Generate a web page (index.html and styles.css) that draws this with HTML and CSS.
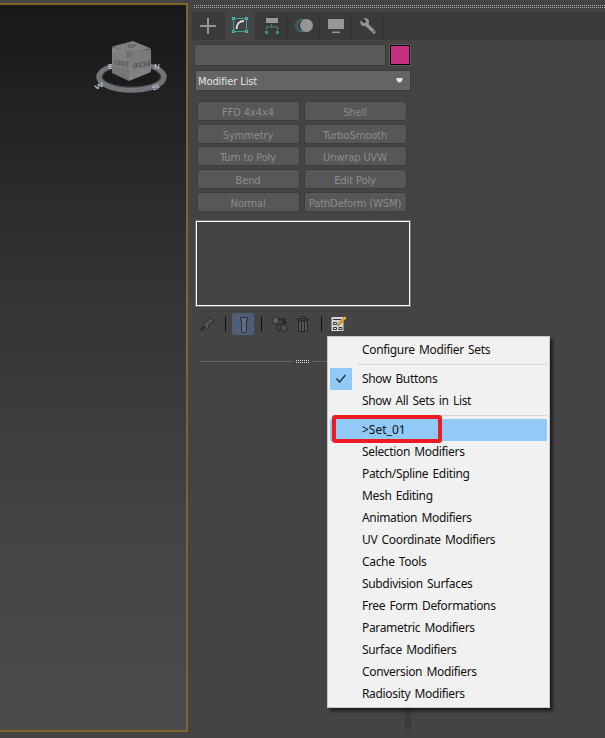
FILE: index.html
```html
<!DOCTYPE html>
<html lang="en">
<head>
<meta charset="utf-8">
<title>Modify panel</title>
<link rel="stylesheet" href="styles.css">
</head>
<body>
<div class="app">
  <section class="viewport">
    <svg class="viewcube" width="78" height="60" viewBox="0 0 78 60">
      <defs>
        <linearGradient id="lf" x1="0" y1="0" x2="0" y2="1"><stop offset="0" stop-color="#858585"/><stop offset="1" stop-color="#727272"/></linearGradient>
        <linearGradient id="rf" x1="0" y1="0" x2="0" y2="1"><stop offset="0" stop-color="#777"/><stop offset="1" stop-color="#858585"/></linearGradient>
      </defs>
      <ellipse cx="40.500" cy="41" rx="32.500" ry="13" fill="none" stroke="#71757a" stroke-width="5.500"/>
      <ellipse cx="40.500" cy="40.500" rx="29" ry="10.500" fill="#1b1b1c" stroke="#45494d" stroke-width="1"/>
      <g class="compass">
        <text x="17" y="33">E</text><text x="63" y="33">N</text>
        <text transform="translate(5 54) rotate(-28) scale(1.250 .8)">W</text>
        <text transform="translate(62 55) rotate(-24) scale(1.500 .9)">S</text>
      </g>
      <path d="M21 11 38 16V45L21 37Z" fill="url(#lf)"/>
      <path d="M38 16 60 13V36L38 45Z" fill="url(#rf)"/>
      <path d="M21 10.500 42 5 60 12.500 38 17Z" fill="#808080"/>
      <path d="M35 15h6v7h-6z" fill="#6d7175"/>
      <text class="face" transform="translate(23.500 28) skewY(14)">LEFT</text>
      <text class="face front" transform="translate(42 33) skewY(-10)">FRONT</text>
      <text class="face top" transform="translate(36 12) skewX(-12)">TOP</text>
    </svg>
  </section>

  <main class="panel">
    <div class="drag-dots"></div>
    <nav class="tabs">
      <span class="tab"><svg width="32" height="28"><path d="M16 6v16M8 14h16" stroke="#969696" stroke-width="2"/></svg></span>
      <span class="tab active"><svg width="30" height="28"><path d="M8.500 6.500h13v13h-13z" fill="none" stroke="#3b9e9c"/><path d="M7.500 5.500h2v2h-2zM20.500 5.500h2v2h-2zM7.500 18.500h2v2h-2zM20.500 18.500h2v2h-2z" fill="#303838" stroke="#4bcac5"/><path d="M11.500 17c0-5 3-8 7.500-8" fill="none" stroke="#ddd" stroke-width="2"/></svg></span>
      <span class="tab"><svg width="32" height="28"><path d="M11 6h12v5H11z" fill="#969696"/><path d="M16.500 12v3M11.500 18v-3h11v3" fill="none" stroke="#3f8988"/><path d="M10 19h3v3h-3zM21 19h3v3h-3z" fill="#3f8988"/></svg></span>
      <span class="tab"><svg width="31" height="28"><circle cx="13" cy="13.500" r="6" fill="none" stroke="#30686a"/><circle cx="15" cy="13.500" r="6" fill="#3a3a3a" stroke="#4c8b8b"/><circle cx="18.500" cy="13.500" r="6.500" fill="#969696"/></svg></span>
      <span class="tab"><svg width="31" height="28"><path d="M8 7h16v10H8zM12 19.500h8v1.500h-8z" fill="#969696"/></svg></span>
      <span class="tab"><svg width="31" height="28"><path d="M14 12 22 20" stroke="#969696" stroke-width="3.200" stroke-linecap="round"/><path d="M11.500 6 14 8.500v2.500h-2.500L8.500 8.500C7.500 13 11 15 14.500 13.500l2.500-2.500C17.500 7 15 5.500 11.500 6z" fill="#969696"/><circle cx="21.500" cy="19.500" r=".8" fill="#444"/></svg></span>
    </nav>
    <div class="controls">
      <div class="name-row"><div class="name-field"></div><div class="swatch"></div></div>
      <div class="dropdown"><span>Modifier List</span><svg width="7" height="5"><path d="M.5 0h6v2L4.500 4.500h-2L.5 2z" fill="#e2e2e2"/></svg></div>
      <div class="buttons">
        <div class="btn">FFD 4x4x4</div><div class="btn">Shell</div>
        <div class="btn">Symmetry</div><div class="btn">TurboSmooth</div>
        <div class="btn">Turn to Poly</div><div class="btn">Unwrap UVW</div>
        <div class="btn">Bend</div><div class="btn">Edit Poly</div>
        <div class="btn">Normal</div><div class="btn">PathDeform (WSM)</div>
      </div>
      <div class="stack"></div>
      <div class="tools">
        <svg class="pin" width="16" height="16" viewBox="0 0 16 16"><path d="M1.500 14.500 6 10" stroke="#292929" stroke-width="2"/><path d="M10 1 15 5.500 13.500 7 12 6.500 9.500 9.500 10 11.500 8.500 13 3.500 8 4.500 6.500 6.500 7 9.500 4 9 2.500Z" fill="#555" stroke="#292929"/></svg>
        <i class="bar"></i>
        <span class="toggle"><svg width="22" height="22"><path d="M8.500 4.500h7v3h-1v11l-1 1h-3l-1-1v-11h-1z" fill="#5a6a80" stroke="#283343"/><path d="M11.500 7v11" stroke="#66758a"/></svg></span>
        <i class="bar"></i>
        <svg class="unique" width="18" height="17"><path d="M8 3.500h5.500v4M11.500 6l2 2 2-2" fill="none" stroke="#292929" stroke-width="2"/><circle cx="4.500" cy="4.500" r="3.500" fill="#5b5b5b" stroke="#2d2d2d"/><circle cx="9" cy="11.500" r="3.500" fill="#444" stroke="#292929"/><circle cx="13" cy="12" r="3.200" fill="#505050" stroke="#292929"/></svg>
        <svg class="trash" width="12" height="17"><path d="M4.500 2V.5h3V2M.5 4V2.500h11V4zM1.500 5h9v10.500h-9zM4.500 6v9M7.500 6v9" fill="#555" stroke="#252525"/></svg>
        <i class="bar"></i>
        <svg class="configure" width="16" height="16"><path d="M.5 1h12v14H.5z" fill="#d5d5d5"/><path d="M2 3.500h8M2.500 6.500h3v2h-3zM2.500 11.500h3v2h-3zM8 11.500h3v2H8zM8 7.500h2" fill="#eee" stroke="#333"/><path d="m6.500 10 1-3 5-5 2 1.500-5.500 5z" fill="#f2a51b" stroke="#493719" stroke-width=".4"/><path d="m12 2 1.500-1.500 2 1.500-1.500 1.500z" fill="#f7bd45"/></svg>
      </div>
      <div class="splitter"><i class="line"></i><i class="grip"></i><i class="line"></i></div>
    </div>
    <div class="scroll-stub"></div>
  </main>

  <div class="menu">
    <div class="item">Configure Modifier Sets</div>
    <hr>
    <div class="item"><span class="check"><svg width="22" height="22"><path d="m6.500 10.500 3 3.500 6-7" fill="none" stroke="#263b50" stroke-width="1.500"/></svg></span>Show Buttons</div>
    <div class="item">Show All Sets in List</div>
    <hr>
    <div class="item selected">&gt;Set_01<span class="marker"></span></div>
    <div class="item">Selection Modifiers</div>
    <div class="item">Patch/Spline Editing</div>
    <div class="item">Mesh Editing</div>
    <div class="item">Animation Modifiers</div>
    <div class="item">UV Coordinate Modifiers</div>
    <div class="item">Cache Tools</div>
    <div class="item">Subdivision Surfaces</div>
    <div class="item">Free Form Deformations</div>
    <div class="item">Parametric Modifiers</div>
    <div class="item">Surface Modifiers</div>
    <div class="item">Conversion Modifiers</div>
    <div class="item">Radiosity Modifiers</div>
  </div>
</div>
</body>
</html>
```

FILE: styles.css
```css
* { box-sizing: border-box; }
body { margin: 0; background: #444; overflow: hidden; }
svg { display: block; flex: none; }

.app {
  position: relative;
  display: flex;
  width: 605px;
  height: 738px;
  background: #444;
  font-family: "DejaVu Sans Condensed", "Noto Sans", sans-serif;
}

.viewport {
  width: 188px;
  height: 729px;
  margin-top: 3px;
  padding: 22px 0 0 91px;
  border: solid #7d6627;
  border-width: 2px 2px 2px 0;
  background: linear-gradient(#181818, #313131 35%, #434343 70%, #4b4b4b);
}
.viewcube { margin-top: 9px; }
.compass text { font: bold 8px "Liberation Sans", sans-serif; fill: #b4b5b7; }
.face { font: bold 7px "Liberation Sans", sans-serif; fill: #5a5a5a; letter-spacing: -0.9px; }
.front { font-size: 8px; letter-spacing: -2.2px; }
.top { font-size: 5px; }

.panel { width: 417px; padding: 5px 0 0 4px; display: flex; flex-direction: column; }
.drag-dots {
  height: 3px;
  margin: 0 0 4px 2px;
  background:
    linear-gradient(#444, #444) 0 1px / 100% 1px no-repeat,
    repeating-linear-gradient(90deg, #aaa 0 1px, #444 1px 2px);
}
.tabs { display: flex; height: 28px; background: #3a3a3a; }
.tab { width: 32px; border-right: 1px solid #333; background: #3a3a3a; }
.tab:first-child { width: 33px; border: 0; }
.tab.active { width: 30px; background: #444; border: 0; }
.tab:nth-child(3) { width: 33px; }

.controls { width: 219px; padding: 4px 0 0 2px; }
.name-row { display: flex; gap: 3px; height: 22px; }
.name-field { width: 192px; border: 1px solid #3b3b3b; background: #595959; }
.swatch { width: 22px; background: #c5307f; border: 1px solid #595959; box-shadow: inset 0 0 0 1px #000; }
.dropdown {
  display: flex;
  align-items: center;
  justify-content: space-between;
  width: 216px;
  height: 21px;
  margin: 4px 0 0 1px;
  padding: 0 7px 0 2px;
  border: 1px solid #3b3b3b;
  background: #646464;
  color: #e5e5e5;
  font-size: 11px;
  letter-spacing: -0.1px;
  line-height: 19px;
}
.dropdown span { padding-top: 1px; }
.buttons {
  display: grid;
  grid-template-columns: 103px 103px;
  grid-template-rows: 20px 19px 20px 20px 20px;
  gap: 3px 4px;
  margin: 10px 0 0 3px;
}
.btn {
  height: 20px;
  padding-right: 1px;
  border: 1px solid #3c3c3c;
  border-radius: 3px;
  background: #575757;
  color: #8d8d8d;
  font-size: 11px;
  letter-spacing: -0.1px;
  line-height: 21px;
  text-align: center;
  white-space: nowrap;
}
.stack {
  width: 216px;
  height: 87px;
  margin: 8px 0 0 1px;
  border: 1px solid #777481;
  box-shadow: inset 0 0 0 1px #fff;
}
.tools { display: flex; align-items: center; height: 22px; margin: 6px 0 0 5px; }
.bar { width: 1px; height: 16px; background: #111; }
.pin { margin-right: 10px; }
.toggle { width: 22px; height: 22px; margin: 0 7px 0 6px; border-radius: 3px; background: #4d5e76; }
.unique { margin: 0 8px 0 9px; }
.trash { margin-right: 12px; }
.configure { margin-left: 9px; }

.splitter { display: flex; align-items: center; gap: 3px; width: 205px; height: 5px; margin: 24px 0 0 6px; }
.line { flex: 1; height: 1px; background: #636363; }
.grip {
  width: 13px;
  height: 3px;
  background:
    linear-gradient(#444, #444) 0 1px / 100% 1px no-repeat,
    repeating-linear-gradient(90deg, #ddd 0 1px, #444 1px 2px);
}
.scroll-stub { width: 6px; height: 30px; margin: auto 0 8px 213px; border-radius: 3px; background: #3b3b3b; }

.menu {
  position: absolute;
  left: 327px;
  top: 336px;
  width: 223px;
  height: 372px;
  padding: 2px;
  border: 1px solid #c9c9c9;
  background: #f1f1f1;
  box-shadow: 3px 3px 3px rgba(0, 0, 0, .55);
  color: #111;
  font-family: "Noto Sans", sans-serif;
  font-size: 12px;
  letter-spacing: -0.34px;
  word-spacing: 1.5px;
}
.item { position: relative; height: 22px; padding-left: 32px; line-height: 22px; white-space: nowrap; }
.menu hr { height: 1px; margin: 3px 0 3px 28px; border: 0; background: #d4d4d4; }
.check { position: absolute; left: 0; top: 0; background: #91c9f7; }
.selected { background: #91c9f7; letter-spacing: 0; }
.marker { position: absolute; left: 2px; top: -4px; width: 110px; height: 28px; border: 4px solid #ed1c24; border-radius: 3px; }
```
